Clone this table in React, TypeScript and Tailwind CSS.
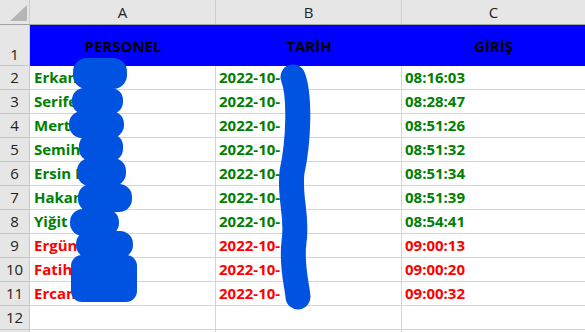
const GREEN = 'text-[#008000]';
const RED = 'text-[#ff0000]';

interface Entry {
  name: string;
  date: string;
  time: string;
  late: boolean;
}

const entries: Entry[] = [
  { name: 'Erkan', date: '2022-10-', time: '08:16:03', late: false },
  { name: 'Serife', date: '2022-10-', time: '08:28:47', late: false },
  { name: 'Mert', date: '2022-10-', time: '08:51:26', late: false },
  { name: 'Semih', date: '2022-10-', time: '08:51:32', late: false },
  { name: 'Ersin E', date: '2022-10-', time: '08:51:34', late: false },
  { name: 'Hakan', date: '2022-10-', time: '08:51:39', late: false },
  { name: 'Yiğit', date: '2022-10-', time: '08:54:41', late: false },
  { name: 'Ergün', date: '2022-10-', time: '09:00:13', late: true },
  { name: 'Fatih', date: '2022-10-', time: '09:00:20', late: true },
  { name: 'Ercan', date: '2022-10-', time: '09:00:32', late: true },
];

const cols = 'grid grid-cols-[30px_186px_186px_1fr]';
const font = { fontFamily: '"Open Sans", "Liberation Sans", sans-serif' };

function RowHead({ n, className = '' }: { n?: number; className?: string }) {
  return (
    <div
      className={`flex justify-center bg-[#e6e6e6] border-r border-b border-[#c8c8c8] text-[15px] text-[#222] ${className}`}
    >
      {n}
    </div>
  );
}

function EmptyRow({ n }: { n?: number }) {
  return (
    <div className={`${cols} h-[24px]`}>
      <RowHead n={n} className="items-center" />
      <div className="border-r border-b border-[#d4d4d4]" />
      <div className="border-r border-b border-[#d4d4d4]" />
      <div className="border-b border-[#d4d4d4]" />
    </div>
  );
}

export default function App() {
  return (
    <div className="relative w-[585px] h-[332px] overflow-hidden bg-white" style={font}>
      {/* column letters */}
      <div className={`${cols} h-[25px] bg-[#e6e6e6] border-b border-[#a3a3a3] text-[15px] text-[#222]`}>
        <div className="relative border-r border-[#cdcdcd]">
          <svg className="absolute left-[10px] top-[5px]" width="17" height="16" viewBox="0 0 17 16">
            <polygon points="17,0 17,16 0,16" fill="#b5b5b5" />
          </svg>
        </div>
        <div className="flex items-center justify-center border-r border-[#cdcdcd]">A</div>
        <div className="flex items-center justify-center border-r border-[#cdcdcd]">B</div>
        <div className="flex items-center justify-center">C</div>
      </div>

      {/* header row */}
      <div className={`${cols} h-[41px]`}>
        <RowHead n={1} className="items-end pb-[3px] leading-none" />
        {['PERSONEL', 'TARİH', 'GİRİŞ'].map((h) => (
          <div
            key={h}
            className="flex items-center justify-center bg-[#0000ff] text-[15px] font-bold text-black pt-[1px]"
          >
            {h}
          </div>
        ))}
      </div>

      {entries.map((e, i) => {
        const tone = e.late ? RED : GREEN;
        return (
          <div key={i} className={`${cols} h-[24px]`}>
            <RowHead n={i + 2} className="items-center" />
            <div className={`flex items-center pl-[4px] border-r border-b border-[#d4d4d4] text-[15px] font-bold ${tone}`}>
              {e.name}
            </div>
            <div className={`flex items-center pl-[3px] border-r border-b border-[#d4d4d4] text-[15px] font-bold ${tone}`}>
              {e.date}
            </div>
            <div className={`flex items-center pl-[3px] border-b border-[#d4d4d4] text-[15px] font-bold ${tone}`}>
              {e.time}
            </div>
          </div>
        );
      })}

      <EmptyRow n={12} />
      <EmptyRow />

      {/* marker strokes hiding names and dates */}
      <svg className="absolute inset-0 pointer-events-none" width="585" height="332" viewBox="0 0 585 332">
        <g fill="#0052e0">
          <rect x="73" y="58" width="54" height="31" rx="14" />
          <rect x="72" y="88" width="51" height="26" rx="12" />
          <rect x="69" y="111" width="55" height="27" rx="13" />
          <rect x="79" y="134" width="44" height="27" rx="12" />
          <rect x="77" y="158" width="49" height="28" rx="13" />
          <rect x="78" y="184" width="54" height="28" rx="13" />
          <rect x="70" y="209" width="49" height="27" rx="13" />
          <rect x="76" y="231" width="57" height="27" rx="13" />
          <rect x="71" y="255" width="66" height="47" rx="11" />
        </g>
        <path
          d="M293 77 C300 95, 299 140, 292 172 C289 200, 298 215, 294 242 C291 265, 297 285, 298 297"
          fill="none"
          stroke="#0052e0"
          strokeWidth="25"
          strokeLinecap="round"
        />
      </svg>
    </div>
  );
}
